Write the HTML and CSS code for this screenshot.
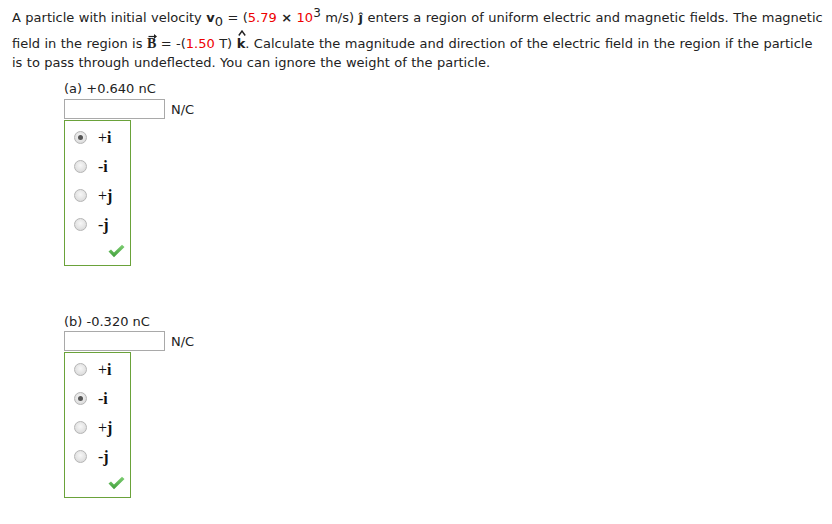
FILE: index.html
```html
<!DOCTYPE html>
<html>
<head>
<meta charset="utf-8">
<link rel="stylesheet" href="styles.css">
</head>
<body>
<div class="page">
  <p class="question">A particle with initial velocity <b class="bv">v</b><sub class="sub">0</sub> = (<span class="num">5.79</span> <b class="times">&times;</b> <span class="num">10</span><sup class="sup">3</sup> m/s) <b class="hatj">ĵ</b> enters a region of uniform electric and magnetic fields. The magnetic field in the region is <span class="vec"><svg class="arrow" width="10" height="6" viewBox="0 0 10 6"><path d="M0.5 3.5 H8" stroke="#222" stroke-width="1.2"/><path d="M6 1 L9 3.5 L6 6 Z" fill="#222"/></svg><b class="serifb">B</b></span> = -(<span class="num">1.50</span> T) <span class="vec hatk"><svg class="hat" width="8" height="6" viewBox="0 0 8 6"><path d="M0.8 5.5 L4 1 L7.2 5.5" fill="none" stroke="#222" stroke-width="1.4"/></svg><b>k</b></span>. Calculate the magnitude and direction of the electric field in the region if the particle is to pass through undeflected. You can ignore the weight of the particle.</p>

  <div class="part part-a">
    <div class="plabel">(a) +0.640 nC</div>
    <div class="answer"><span class="input"></span><span class="unit">N/C</span></div>
    <div class="choices">
      <div class="row"><span class="radio on"></span><span class="opt">+<b>i</b></span></div>
      <div class="row"><span class="radio"></span><span class="opt">-<b>i</b></span></div>
      <div class="row"><span class="radio"></span><span class="opt">+<b>j</b></span></div>
      <div class="row"><span class="radio"></span><span class="opt">-<b>j</b></span></div>
      <div class="checkrow"><svg width="17" height="14" viewBox="0 0 17 14"><defs><linearGradient id="g1" x1="0" y1="0" x2="0" y2="1"><stop offset="0" stop-color="#7fcf73"/><stop offset="1" stop-color="#3f9e3a"/></linearGradient></defs><path d="M0.5 7.5 L3 5.5 L6 8.5 L14 0.8 L16.5 3 L6 13.2 Z" fill="url(#g1)"/></svg></div>
    </div>
  </div>

  <div class="part part-b">
    <div class="plabel">(b) -0.320 nC</div>
    <div class="answer"><span class="input"></span><span class="unit">N/C</span></div>
    <div class="choices">
      <div class="row"><span class="radio"></span><span class="opt">+<b>i</b></span></div>
      <div class="row"><span class="radio on"></span><span class="opt">-<b>i</b></span></div>
      <div class="row"><span class="radio"></span><span class="opt">+<b>j</b></span></div>
      <div class="row"><span class="radio"></span><span class="opt">-<b>j</b></span></div>
      <div class="checkrow"><svg width="17" height="14" viewBox="0 0 17 14"><defs><linearGradient id="g2" x1="0" y1="0" x2="0" y2="1"><stop offset="0" stop-color="#7fcf73"/><stop offset="1" stop-color="#3f9e3a"/></linearGradient></defs><path d="M0.5 7.5 L3 5.5 L6 8.5 L14 0.8 L16.5 3 L6 13.2 Z" fill="url(#g2)"/></svg></div>
    </div>
  </div>
</div>
</body>
</html>
```

FILE: styles.css
```css
html, body {
  margin: 0;
  padding: 0;
  background: #fff;
}
body {
  font-family: "DejaVu Sans", Verdana, sans-serif;
  font-size: 13px;
  color: #222;
}
.page {
  padding: 8px 8px 0 12px;
}
.question {
  margin: 0;
  line-height: 19px;
  word-spacing: 0.3px;
}
.num { color: #e00; }
.bv { font-weight: bold; }
.times { font-weight: bold; }
.sub {
  font-size: 13px;
  vertical-align: -4px;
  line-height: 0;
}
.sup {
  font-size: 12px;
  vertical-align: 5px;
  line-height: 0;
}
.hatj { font-weight: bold; }
.vec {
  display: inline-block;
  position: relative;
  padding-top: 7px;
  line-height: 19px;
}
.arrow {
  position: absolute;
  left: 1px;
  top: 6px;
}
.serifb {
  font-family: "Liberation Serif", "Times New Roman", serif;
  font-size: 14px;
}
.hatk .hat {
  position: absolute;
  left: 1px;
  top: 3px;
}
.part {
  margin-left: 52px;
}
.part-a { margin-top: 8px; }
.part-b { margin-top: 47px; }
.plabel {
  line-height: 18px;
}
.part-a .plabel { margin-bottom: 1px; }
.answer {
  display: flex;
  align-items: center;
  height: 20px;
}
.input {
  width: 99px;
  height: 18px;
  border: 1px solid #a9a9a9;
  background: #fff;
}
.unit {
  margin-left: 6px;
}
.choices {
  width: 65px;
  height: 142px;
  border: 1px solid #6aa23a;
  margin-top: 1px;
  padding-top: 2px;
  box-sizing: content-box;
}
.row {
  height: 29px;
  display: flex;
  align-items: center;
  padding-left: 9px;
}
.radio {
  width: 11px;
  height: 11px;
  border-radius: 50%;
  border: 1px solid #b5b5b5;
  background: radial-gradient(circle at 50% 40%, #f7f7f7 0%, #e2e2e2 60%, #d2d2d2 100%);
  position: relative;
}
.radio.on::after {
  content: "";
  position: absolute;
  left: 3px;
  top: 3px;
  width: 5px;
  height: 5px;
  border-radius: 50%;
  background: #555;
}
.opt {
  margin-left: 11px;
  font-family: "Liberation Serif", "Times New Roman", serif;
  font-size: 16px;
  color: #111;
}
.opt b { font-weight: bold; }
.checkrow {
  display: flex;
  justify-content: flex-end;
  padding-right: 5px;
  padding-top: 5px;
}
```
